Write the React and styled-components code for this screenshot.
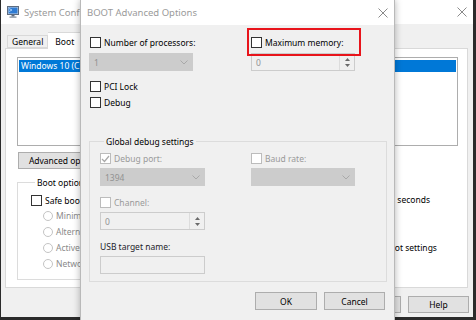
import React from "react";
import styled, { createGlobalStyle, css } from "styled-components";

const Global = createGlobalStyle`
  html, body { margin: 0; padding: 0; width: 476px; height: 320px; overflow: hidden; background: #f0f0f0; }
  body { font-family: "Noto Sans", "Open Sans", sans-serif; font-size: 8.5px; color: #000; }
  * { box-sizing: border-box; }
  #root { width: 476px; height: 320px; }
`;

const Stage = styled.div`
  position: relative;
  width: 476px;
  height: 320px;
  overflow: hidden;
`;

/* ---------- shared controls ---------- */

const Box = styled.span`
  flex: 0 0 auto;
  width: 11px;
  height: 11px;
  background: #fff;
  border: 1px solid ${(p) => (p.$disabled ? "#bcbcbc" : "#333")};
  display: flex;
  align-items: center;
  justify-content: center;
`;

const CheckRow = styled.label`
  display: flex;
  align-items: center;
  gap: 3px;
  height: 11px;
  line-height: 11px;
  white-space: nowrap;
  color: ${(p) => (p.$disabled ? "#9a9a9a" : "#000")};
  padding-left: ${(p) => p.$indent || 0}px;
  margin-top: ${(p) => p.$mt || 0}px;
`;

const CheckMark = () => (
  <svg width="9" height="8" viewBox="0 0 9 8">
    <polyline points="1,4 3.5,6.5 8,1" fill="none" stroke="#a8a8a8" strokeWidth="1.2" />
  </svg>
);

const Checkbox = ({ label, disabled, checked, indent, mt }) => (
  <CheckRow $disabled={disabled} $indent={indent} $mt={mt}>
    <Box $disabled={disabled}>{checked && <CheckMark />}</Box>
    <span>{label}</span>
  </CheckRow>
);

const Radio = styled.span`
  flex: 0 0 auto;
  width: 10px;
  height: 10px;
  border-radius: 50%;
  border: 1px solid #c4c4c4;
  background: #fff;
`;

const RadioRow = styled.div`
  display: flex;
  align-items: center;
  gap: 3px;
  height: 10px;
  line-height: 10px;
  color: #8a8a8a;
  white-space: nowrap;
`;

const Button = styled.div`
  flex: 0 0 auto;
  width: ${(p) => p.$w || 61}px;
  height: ${(p) => p.$h || 18}px;
  background: #e1e1e1;
  border: 1px solid #adadad;
  display: flex;
  align-items: center;
  justify-content: center;
  white-space: nowrap;
  color: #000;
`;

const Field = styled.div`
  width: ${(p) => p.$w || 104}px;
  height: 18px;
  margin-top: ${(p) => p.$mt || 0}px;
  display: flex;
  align-items: center;
  border: 1px solid #cccccc;
  background: ${(p) => (p.$combo ? "#cccccc" : "#f0f0f0")};
  color: #929292;
`;

const FieldText = styled.span`
  flex: 1;
  padding-left: 4px;
`;

const Chevron = styled.svg`
  margin-right: 4px;
`;

const SpinButtons = styled.div`
  width: 15px;
  align-self: stretch;
  border-left: 1px solid #dcdcdc;
  display: flex;
  flex-direction: column;
  align-items: center;
  justify-content: center;
  gap: 3px;
`;

const Combo = ({ value, w, mt }) => (
  <Field $combo $w={w} $mt={mt}>
    <FieldText>{value}</FieldText>
    <Chevron width="8" height="5" viewBox="0 0 8 5">
      <polyline points="0.5,0.5 4,4 7.5,0.5" fill="none" stroke="#a9a9a9" strokeWidth="1" />
    </Chevron>
  </Field>
);

const Spin = ({ value, w, mt }) => (
  <Field $w={w} $mt={mt}>
    <FieldText>{value}</FieldText>
    <SpinButtons>
      <svg width="5" height="3" viewBox="0 0 5 3"><polygon points="0,3 2.5,0 5,3" fill="#6a6a6a" /></svg>
      <svg width="5" height="3" viewBox="0 0 5 3"><polygon points="0,0 2.5,3 5,0" fill="#6a6a6a" /></svg>
    </SpinButtons>
  </Field>
);

const CloseGlyph = () => (
  <svg width="10" height="10" viewBox="0 0 10 10">
    <path d="M0.5 0.5L9.5 9.5M9.5 0.5L0.5 9.5" stroke="#8a8a8a" strokeWidth="1" />
  </svg>
);

const Group = styled.fieldset`
  margin: 0;
  min-width: 0;
  border: 1px solid #dcdcdc;
  padding: 0 0 ${(p) => p.$pb || 0}px ${(p) => p.$pl || 0}px;
  width: ${(p) => p.$w}px;
  height: ${(p) => p.$h}px;
  margin-top: ${(p) => p.$mt || 0}px;
`;

const Legend = styled.legend`
  margin-left: 4px;
  padding: 0 2px;
  line-height: 9px;
  height: 9px;
  color: #000;
`;

/* ---------- background window ---------- */

const Window = styled.div`
  width: 476px;
  height: 320px;
  background: #f0f0f0;
  border-left: 1px solid #2b2b2b;
  border-right: 3px solid #2b2b2b;
  border-bottom: 3px solid #2b2b2b;
  display: flex;
  flex-direction: column;
`;

const TitleBar = styled.div`
  flex: 0 0 ${(p) => p.$h}px;
  background: #fff;
  display: flex;
  align-items: center;
  padding: 0 ${(p) => p.$pr}px 0 ${(p) => p.$pl}px;
`;

const TitleText = styled.span`
  flex: 1;
  font-size: 9.5px;
  color: #9a9a9a;
  margin-left: ${(p) => p.$ml || 0}px;
  white-space: nowrap;
  overflow: hidden;
`;

const WinBody = styled.div`
  flex: 1;
  display: flex;
  flex-direction: column;
  padding: 0 4px;
`;

const TabStrip = styled.div`
  flex: 0 0 24px;
  display: flex;
  align-items: flex-end;
  padding-left: 2px;
`;

const Tab = styled.div`
  height: ${(p) => (p.$active ? 17 : 13)}px;
  padding: 0 ${(p) => (p.$active ? 7 : 4)}px;
  margin-bottom: ${(p) => (p.$active ? -1 : 0)}px;
  background: ${(p) => (p.$active ? "#fff" : "#f0f0f0")};
  border: 1px solid #d9d9d9;
  border-bottom: ${(p) => (p.$active ? "none" : "1px solid #d9d9d9")};
  ${(p) => !p.$first && css`border-left: none;`}
  position: relative;
  z-index: ${(p) => (p.$active ? 1 : 0)};
  display: flex;
  align-items: center;
  white-space: nowrap;
`;

const Panel = styled.div`
  flex: 0 0 240px;
  margin-right: 1px;
  background: #fff;
  border: 1px solid #d9d9d9;
  padding: 8px 9px 7px 11px;
  display: flex;
  flex-direction: column;
`;

const ListBox = styled.div`
  flex: 0 0 89px;
  border: 1px solid #adadad;
  padding: 2px 1px;
`;

const ListItem = styled.div`
  height: 12px;
  line-height: 12px;
  padding-left: 2px;
  background: ${(p) => (p.$selected ? "#0078d7" : "transparent")};
  color: ${(p) => (p.$selected ? "#fff" : "#000")};
  white-space: nowrap;
`;

const ButtonRow = styled.div`
  display: flex;
  gap: 7px;
  margin: 6px 0 0 1px;
`;

const BootArea = styled.div`
  display: flex;
  justify-content: space-between;
  margin-top: 9px;
`;

const GroupInner = styled.div`
  display: flex;
  flex-direction: column;
  margin-top: 8px;
`;

const RadioList = styled.div`
  display: flex;
  flex-direction: column;
  gap: 6px;
  margin: 5px 0 0 12px;
`;

const RightCol = styled.div`
  width: 150px;
  padding-top: 13px;
  display: flex;
  flex-direction: column;
`;

const TimeoutRow = styled.div`
  display: flex;
  align-items: center;
  justify-content: flex-end;
  height: 16px;
  padding-right: 28px;
`;

const PermanentRow = styled.label`
  display: flex;
  align-items: flex-start;
  margin: 35px 0 0 0;
  padding-left: 41px;
  line-height: 11px;
`;

const PermanentText = styled.span`
  max-width: 95px;
`;

const Footer = styled.div`
  display: flex;
  justify-content: flex-end;
  gap: 7px;
  margin-top: 8px;
`;

const AppIcon = () => (
  <svg width="12" height="12" viewBox="0 0 12 12">
    <rect x="0.5" y="0.5" width="11" height="8" fill="#c9d3de" stroke="#5e6c80" />
    <rect x="1.5" y="1.5" width="9" height="6" fill="#2f7bd3" />
    <path d="M2 2.5l3 1.5-3 1.5" fill="none" stroke="#bfe0ff" strokeWidth="0.8" />
    <rect x="4.5" y="9" width="3" height="1.5" fill="#5e6c80" />
    <rect x="2.5" y="10.5" width="7" height="1.2" fill="#7d8898" />
  </svg>
);

/* ---------- dialog ---------- */

const Dialog = styled.div`
  position: absolute;
  left: 80px;
  top: 0;
  width: 315px;
  height: 340px;
  background: #f0f0f0;
  border-left: 1px solid #b9b9b9;
  border-right: 1px solid #b9b9b9;
  box-shadow: 0 0 7px rgba(0, 0, 0, 0.3);
  display: flex;
  flex-direction: column;
  z-index: 5;
`;

const DialogBody = styled.div`
  padding: 12px 7px 0 8px;
  display: flex;
  flex-direction: column;
`;

const TwoCols = styled.div`
  display: grid;
  grid-template-columns: ${(p) => p.$left}px 1fr;
  align-items: start;
`;

const Col = styled.div`
  display: flex;
  flex-direction: column;
  align-items: flex-start;
  padding-top: ${(p) => p.$pt || 0}px;
`;

const Highlight = styled.div`
  position: relative;
  &::after {
    content: "";
    position: absolute;
    left: -4px;
    top: -9px;
    width: 110px;
    height: 24px;
    border: 2px solid #e8141b;
  }
`;

const PlainLabel = styled.div`
  line-height: 11px;
  height: 11px;
  margin-top: ${(p) => p.$mt || 0}px;
  color: #1c1c2a;
`;

const DialogButtons = styled.div`
  display: flex;
  justify-content: flex-end;
  gap: 7px;
  margin-top: 10px;
  padding-right: 2px;
`;

export default function App() {
  return (
    <Stage>
      <Global />
      <Window>
        <TitleBar $h={24} $pl={6} $pr={6}>
          <AppIcon />
          <TitleText $ml={5}>System Configuration</TitleText>
          <CloseGlyph />
        </TitleBar>
        <WinBody>
          <TabStrip>
            <Tab $first>General</Tab>
            <Tab $active>Boot</Tab>
          </TabStrip>
          <Panel>
            <ListBox>
              <ListItem $selected>Windows 10 (C:\Windows)</ListItem>
            </ListBox>
            <ButtonRow>
              <Button $w={100} $h={17}>Advanced options...</Button>
            </ButtonRow>
            <BootArea>
              <Group $w={250} $h={102} $pl={13}>
                <Legend>Boot options</Legend>
                <GroupInner>
                  <Checkbox label="Safe boot" />
                  <RadioList>
                    <RadioRow><Radio />Minimal</RadioRow>
                    <RadioRow><Radio />Alternate shell</RadioRow>
                    <RadioRow><Radio />Active Directory repair</RadioRow>
                    <RadioRow><Radio />Network</RadioRow>
                  </RadioList>
                </GroupInner>
              </Group>
              <RightCol>
                <TimeoutRow>
                  <span>seconds</span>
                </TimeoutRow>
                <PermanentRow>
                  <PermanentText>Make all boot settings permanent</PermanentText>
                </PermanentRow>
              </RightCol>
            </BootArea>
          </Panel>
          <Footer>
            <Button $h={17}>Apply</Button>
            <Button $h={17}>Help</Button>
          </Footer>
        </WinBody>
      </Window>

      <Dialog>
        <TitleBar $h={25} $pl={6} $pr={6}>
          <TitleText>BOOT Advanced Options</TitleText>
          <CloseGlyph />
        </TitleBar>
        <DialogBody>
          <TwoCols $left={162}>
            <Col>
              <Checkbox label="Number of processors:" indent={1} />
              <Combo value="1" w={104} mt={5} />
              <Checkbox label="PCI Lock" indent={1} mt={10} />
              <Checkbox label="Debug" indent={1} mt={5} />
            </Col>
            <Col>
              <Highlight>
                <Checkbox label="Maximum memory:" />
              </Highlight>
              <Spin value="0" w={104} mt={5} />
            </Col>
          </TwoCols>
          <Group $w={298} $h={145} $pl={10} $pb={7} $mt={29}>
            <Legend>Global debug settings</Legend>
            <TwoCols $left={151}>
              <Col $pt={7}>
                <Checkbox label="Debug port:" disabled checked />
                <Combo value="1394" w={105} mt={4} />
                <Checkbox label="Channel:" disabled mt={11} />
                <Spin value="0" w={105} mt={4} />
                <PlainLabel $mt={11}>USB target name:</PlainLabel>
                <Field $w={105} $mt={4} />
              </Col>
              <Col $pt={7}>
                <Checkbox label="Baud rate:" disabled />
                <Combo value="" w={104} mt={4} />
              </Col>
            </TwoCols>
          </Group>
          <DialogButtons>
            <Button $w={62}>OK</Button>
            <Button $w={61}>Cancel</Button>
          </DialogButtons>
        </DialogBody>
      </Dialog>
    </Stage>
  );
}
